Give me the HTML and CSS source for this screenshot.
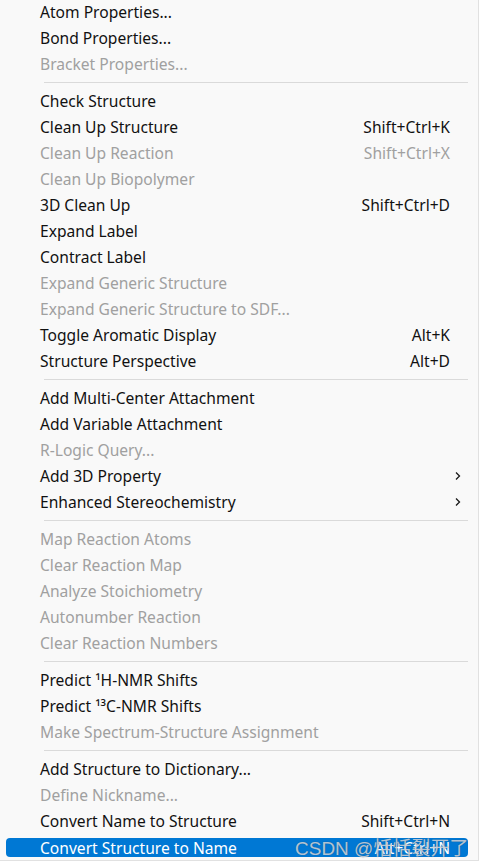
FILE: index.html
```html
<!DOCTYPE html>
<html>
<head>
<meta charset="utf-8">
<link rel="stylesheet" href="styles.css">
</head>
<body>
<div class="menu">
  <div class="item"><span class="label">Atom Properties...</span></div>
  <div class="item"><span class="label">Bond Properties...</span></div>
  <div class="item disabled"><span class="label">Bracket Properties...</span></div>
  <div class="sep"></div>
  <div class="item"><span class="label">Check Structure</span></div>
  <div class="item"><span class="label">Clean Up Structure</span><span class="key">Shift+Ctrl+K</span></div>
  <div class="item disabled"><span class="label">Clean Up Reaction</span><span class="key">Shift+Ctrl+X</span></div>
  <div class="item disabled"><span class="label">Clean Up Biopolymer</span></div>
  <div class="item"><span class="label">3D Clean Up</span><span class="key">Shift+Ctrl+D</span></div>
  <div class="item"><span class="label">Expand Label</span></div>
  <div class="item"><span class="label">Contract Label</span></div>
  <div class="item disabled"><span class="label">Expand Generic Structure</span></div>
  <div class="item disabled"><span class="label">Expand Generic Structure to SDF...</span></div>
  <div class="item"><span class="label">Toggle Aromatic Display</span><span class="key">Alt+K</span></div>
  <div class="item"><span class="label">Structure Perspective</span><span class="key">Alt+D</span></div>
  <div class="sep"></div>
  <div class="item"><span class="label">Add Multi-Center Attachment</span></div>
  <div class="item"><span class="label">Add Variable Attachment</span></div>
  <div class="item disabled"><span class="label">R-Logic Query...</span></div>
  <div class="item"><span class="label">Add 3D Property</span><svg class="chev" width="6" height="10" viewBox="0 0 6 10"><path d="M1 1.5 L4.5 5 L1 8.5" fill="none" stroke="#1a1a1a" stroke-width="1.3"/></svg></div>
  <div class="item"><span class="label">Enhanced Stereochemistry</span><svg class="chev" width="6" height="10" viewBox="0 0 6 10"><path d="M1 1.5 L4.5 5 L1 8.5" fill="none" stroke="#1a1a1a" stroke-width="1.3"/></svg></div>
  <div class="sep"></div>
  <div class="item disabled"><span class="label">Map Reaction Atoms</span></div>
  <div class="item disabled"><span class="label">Clear Reaction Map</span></div>
  <div class="item disabled"><span class="label">Analyze Stoichiometry</span></div>
  <div class="item disabled"><span class="label">Autonumber Reaction</span></div>
  <div class="item disabled"><span class="label">Clear Reaction Numbers</span></div>
  <div class="sep"></div>
  <div class="item"><span class="label">Predict ¹H-NMR Shifts</span></div>
  <div class="item"><span class="label">Predict ¹³C-NMR Shifts</span></div>
  <div class="item disabled"><span class="label">Make Spectrum-Structure Assignment</span></div>
  <div class="sep"></div>
  <div class="item"><span class="label">Add Structure to Dictionary...</span></div>
  <div class="item disabled"><span class="label">Define Nickname...</span></div>
  <div class="item"><span class="label">Convert Name to Structure</span><span class="key">Shift+Ctrl+N</span></div>
  <div class="item active"><span class="label">Convert Structure to Name</span><span class="key">Alt+Ctrl+N</span></div>
  <div class="watermark">CSDN @恬恬裂开了</div>
</div>
</body>
</html>
```
FILE: styles.css
```css
html, body {
  margin: 0;
  padding: 0;
  background: #ffffff;
}
body {
  width: 480px;
  height: 863px;
  overflow: hidden;
}
.menu {
  position: relative;
  box-sizing: border-box;
  width: 479px;
  height: 862px;
  margin-top: -1px;
  background: #f9f9f9;
  border-right: 1px solid #e1e1e1;
  border-bottom: 1px solid #e1e1e1;
  padding: 0 10px 0 6px;
  font-family: "Noto Sans", "Noto Sans CJK SC", sans-serif;
  font-size: 15.6px;
  color: #111111;
}
.item {
  height: 26px;
  display: flex;
  align-items: center;
  padding: 0 18px 0 34px;
  border-radius: 4px;
}
.label {
  flex: 1;
  white-space: nowrap;
}
.key {
  white-space: nowrap;
}
.disabled {
  color: #a0a0a0;
}
.chev {
  margin-right: -11px;
}
.sep {
  height: 11px;
  display: flex;
  align-items: center;
  padding-left: 38px;
}
.sep::before {
  content: "";
  flex: 1;
  height: 1px;
  background: #dadada;
}
.active {
  background: #0078d4;
  color: #ffffff;
  height: 19px;
  margin-top: 4px;
  margin-bottom: 3px;
}
.watermark {
  position: absolute;
  left: 295px;
  top: 834px;
  font-family: "Liberation Sans", "Noto Sans CJK SC", sans-serif;
  font-size: 19px;
  color: rgba(220, 225, 235, 0.8);
  text-shadow: 0 0 1px rgba(60, 60, 60, 0.6);
  white-space: nowrap;
}
```
